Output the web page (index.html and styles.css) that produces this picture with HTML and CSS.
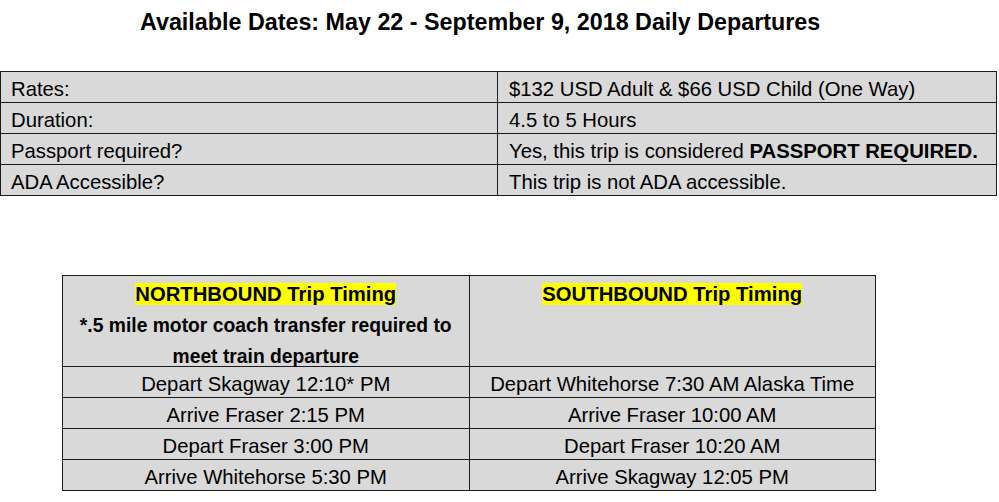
FILE: index.html
```html
<!DOCTYPE html>
<html>
<head>
<meta charset="utf-8">
<link rel="stylesheet" href="styles.css">
</head>
<body>
<h1 class="title">Available Dates: May 22 - September 9, 2018 Daily Departures</h1>
<table class="info">
  <tr><td class="label">Rates:</td><td>$132 USD Adult &amp; $66 USD Child (One Way)</td></tr>
  <tr><td class="label">Duration:</td><td>4.5 to 5 Hours</td></tr>
  <tr><td class="label">Passport required?</td><td>Yes, this trip is considered <b>PASSPORT REQUIRED.</b></td></tr>
  <tr><td class="label">ADA Accessible?</td><td>This trip is not ADA accessible.</td></tr>
</table>
<table class="timing">
  <tr class="head">
    <td><div class="head-box"><span class="hl">NORTHBOUND Trip Timing</span><br><span class="note">*.5 mile motor coach transfer required to<br>meet train departure</span></div></td>
    <td><div class="head-box"><span class="hl">SOUTHBOUND Trip Timing</span></div></td>
  </tr>
  <tr><td>Depart Skagway 12:10* PM</td><td>Depart Whitehorse 7:30 AM Alaska Time</td></tr>
  <tr><td>Arrive Fraser 2:15 PM</td><td>Arrive Fraser 10:00 AM</td></tr>
  <tr><td>Depart Fraser 3:00 PM</td><td>Depart Fraser 10:20 AM</td></tr>
  <tr><td>Arrive Whitehorse 5:30 PM</td><td>Arrive Skagway 12:05 PM</td></tr>
</table>
</body>
</html>
```
FILE: styles.css
```css
html, body {
  margin: 0;
  padding: 0;
  background: #ffffff;
}
body {
  font-family: "Liberation Sans", Arial, sans-serif;
  color: #000000;
  width: 999px;
}
.title {
  margin: 0;
  padding: 8px 0 0 140px;
  height: 71px;
  box-sizing: border-box;
  font-size: 23.3px;
  font-weight: bold;
  line-height: 28px;
  color: #000;
}
table {
  border-collapse: collapse;
  background: #d9d9d9;
}
td {
  border: 1px solid #1a1a1a;
  padding: 5px 0 0 0;
  height: 25px;
  line-height: 25px;
  font-size: 20.3px;
  vertical-align: top;
  white-space: nowrap;
}
.info {
  width: 997px;
  margin: 0;
}
.info td {
  padding-left: 11px;
}
.info td.label {
  width: 486px;
  padding-left: 10px;
}
.timing {
  width: 814px;
  margin: 79px 0 0 62px;
}
.timing td {
  width: 50%;
  text-align: center;
}
.timing tr.head td {
  height: 90px;
  padding: 0;
  font-weight: bold;
}
.head-box {
  height: 90px;
  padding-top: 3px;
  box-sizing: border-box;
  line-height: 30.5px;
}
.note {
  font-size: 19.3px;
}
.hl {
  background: #ffff00;
}
```
